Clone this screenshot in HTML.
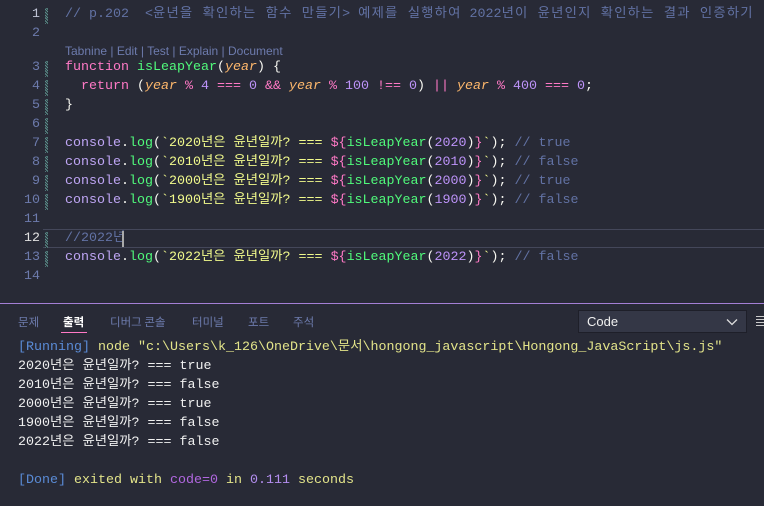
<!DOCTYPE html>
<html><head><meta charset="utf-8"><style>
*{margin:0;padding:0;box-sizing:border-box}
body{width:764px;height:506px;background:#282a36;overflow:hidden;position:relative;font-family:"Liberation Mono","Noto Sans CJK KR",monospace;font-size:13.33px;color:#f8f8f2}
.l{position:absolute;left:0;height:19px;line-height:19px;white-space:pre;width:764px;overflow:hidden}
.n{position:absolute;left:0;width:40px;text-align:right;color:#6d7bad}
.g{position:absolute;left:45px;top:3px;width:3px;height:16px;background:repeating-linear-gradient(45deg,#5a8f8a 0 1px,#282a36 1px 2px)}
.c{position:absolute;left:65px}
.cm{color:#6272a4}.kw{color:#ff79c6}.fn{color:#50fa7b}.pa{color:#ffb86c;font-style:italic}.nu{color:#bd93f9}.st{color:#f1fa8c}.co{color:#bfa6f5}
.o{position:absolute;left:18px;height:19px;line-height:19px;white-space:pre;color:#f0f0f0}
.t{position:absolute;top:0;white-space:nowrap}
.k{letter-spacing:1.2px}
</style></head><body>
<div class="l" style="top:5px"><span class="n" style="color:#c0c4d6">1</span><span class="g"></span><span class="c cm">// p.202  &lt;<span class="k">윤년을 확인하는 함수 만들기</span>&gt; <span class="k">예제를 실행하여</span> 2022<span class="k">년이 윤년인지 확인하는 결과 인증하기</span></span></div>
<div class="l" style="top:24px"><span class="n">2</span></div>
<div class="l" style="top:42px;font-family:'Liberation Sans',sans-serif;font-size:12px;color:#6d7bad"><span style="position:absolute;left:65px">Tabnine | Edit | Test | Explain | Document</span></div>
<div class="l" style="top:58px"><span class="n">3</span><span class="g"></span><span class="c"><span class="kw">function</span> <span class="fn">isLeapYear</span>(<span class="pa">year</span>) {</span></div>
<div class="l" style="top:77px"><span class="n">4</span><span class="g"></span><span class="c">  <span class="kw">return</span> (<span class="pa">year</span> <span class="kw">%</span> <span class="nu">4</span> <span class="kw">===</span> <span class="nu">0</span> <span class="kw">&amp;&amp;</span> <span class="pa">year</span> <span class="kw">%</span> <span class="nu">100</span> <span class="kw">!==</span> <span class="nu">0</span>) <span class="kw">||</span> <span class="pa">year</span> <span class="kw">%</span> <span class="nu">400</span> <span class="kw">===</span> <span class="nu">0</span>;</span></div>
<div class="l" style="top:96px"><span class="n">5</span><span class="g"></span><span class="c">}</span></div>
<div class="l" style="top:115px"><span class="n">6</span><span class="g"></span></div>
<div class="l" style="top:134px"><span class="n">7</span><span class="g"></span><span class="c"><span class="co">console</span>.<span class="fn">log</span>(<span class="st">`2020년은 윤년일까? === </span><span class="kw">${</span><span class="fn">isLeapYear</span>(<span class="nu">2020</span>)<span class="kw">}</span><span class="st">`</span>); <span class="cm">// true</span></span></div>
<div class="l" style="top:153px"><span class="n">8</span><span class="g"></span><span class="c"><span class="co">console</span>.<span class="fn">log</span>(<span class="st">`2010년은 윤년일까? === </span><span class="kw">${</span><span class="fn">isLeapYear</span>(<span class="nu">2010</span>)<span class="kw">}</span><span class="st">`</span>); <span class="cm">// false</span></span></div>
<div class="l" style="top:172px"><span class="n">9</span><span class="g"></span><span class="c"><span class="co">console</span>.<span class="fn">log</span>(<span class="st">`2000년은 윤년일까? === </span><span class="kw">${</span><span class="fn">isLeapYear</span>(<span class="nu">2000</span>)<span class="kw">}</span><span class="st">`</span>); <span class="cm">// true</span></span></div>
<div class="l" style="top:191px"><span class="n">10</span><span class="g"></span><span class="c"><span class="co">console</span>.<span class="fn">log</span>(<span class="st">`1900년은 윤년일까? === </span><span class="kw">${</span><span class="fn">isLeapYear</span>(<span class="nu">1900</span>)<span class="kw">}</span><span class="st">`</span>); <span class="cm">// false</span></span></div>
<div class="l" style="top:210px"><span class="n">11</span></div>
<div style="position:absolute;top:229px;left:43px;width:721px;height:19px;border-top:1px solid #44475a;border-bottom:1px solid #44475a"></div>
<div class="l" style="top:229px"><span class="n" style="color:#e0e0e0">12</span><span class="g"></span><span class="c cm">//2022년</span><span style="position:absolute;left:122px;top:2px;width:2px;height:16px;background:#aaa"></span></div>
<div class="l" style="top:248px"><span class="n">13</span><span class="g"></span><span class="c"><span class="co">console</span>.<span class="fn">log</span>(<span class="st">`2022년은 윤년일까? === </span><span class="kw">${</span><span class="fn">isLeapYear</span>(<span class="nu">2022</span>)<span class="kw">}</span><span class="st">`</span>); <span class="cm">// false</span></span></div>
<div class="l" style="top:267px"><span class="n">14</span></div>
<div style="position:absolute;top:303px;left:0;width:764px;height:1px;background:#a47fd6"></div>
<div style="position:absolute;top:313px;left:18px;width:400px;height:18px;font-family:'Noto Sans CJK KR',sans-serif;font-size:11.5px;color:#6d7bad;line-height:18px"><span class="t" style="left:0">문제</span><span class="t" style="left:45px;color:#fff;font-weight:bold">출력</span><span class="t" style="left:92px">디버그 콘솔</span><span class="t" style="left:174px">터미널</span><span class="t" style="left:230px">포트</span><span class="t" style="left:275px">주석</span></div>
<div style="position:absolute;top:332px;left:61px;width:26px;height:1px;background:#ff79c6"></div>
<div style="position:absolute;top:310px;left:578px;width:169px;height:23px;background:#343746;border:1px solid #1e1f29;font-family:'Liberation Sans',sans-serif;font-size:13px;color:#f0f0f0;line-height:21px;padding-left:8px">Code<svg style="position:absolute;right:8px;top:7px" width="12" height="8" viewBox="0 0 12 8"><path d="M1 1.5 L6 6.5 L11 1.5" stroke="#ddd" fill="none" stroke-width="1.3"/></svg></div>
<div style="position:absolute;top:316px;left:756px;width:8px;height:11px;background:repeating-linear-gradient(#ccc 0 1px,transparent 1px 3px)"></div>
<div class="o" style="top:338px"><span style="color:#5a8bd6">[Running]</span> <span style="color:#e3e48a">node "c:\Users\k_126\OneDrive\문서\hongong_javascript\Hongong_JavaScript\js.js"</span></div>
<div class="o" style="top:357px">2020년은 윤년일까? === true</div>
<div class="o" style="top:376px">2010년은 윤년일까? === false</div>
<div class="o" style="top:395px">2000년은 윤년일까? === true</div>
<div class="o" style="top:414px">1900년은 윤년일까? === false</div>
<div class="o" style="top:433px">2022년은 윤년일까? === false</div>
<div class="o" style="top:471px"><span style="color:#5a8bd6">[Done]</span> <span style="color:#e3e48a">exited with</span> <span style="color:#b167e0">code=0</span> <span style="color:#e3e48a">in</span> <span style="color:#b48ef0">0.111</span> <span style="color:#e3e48a">seconds</span></div>
</body></html>
